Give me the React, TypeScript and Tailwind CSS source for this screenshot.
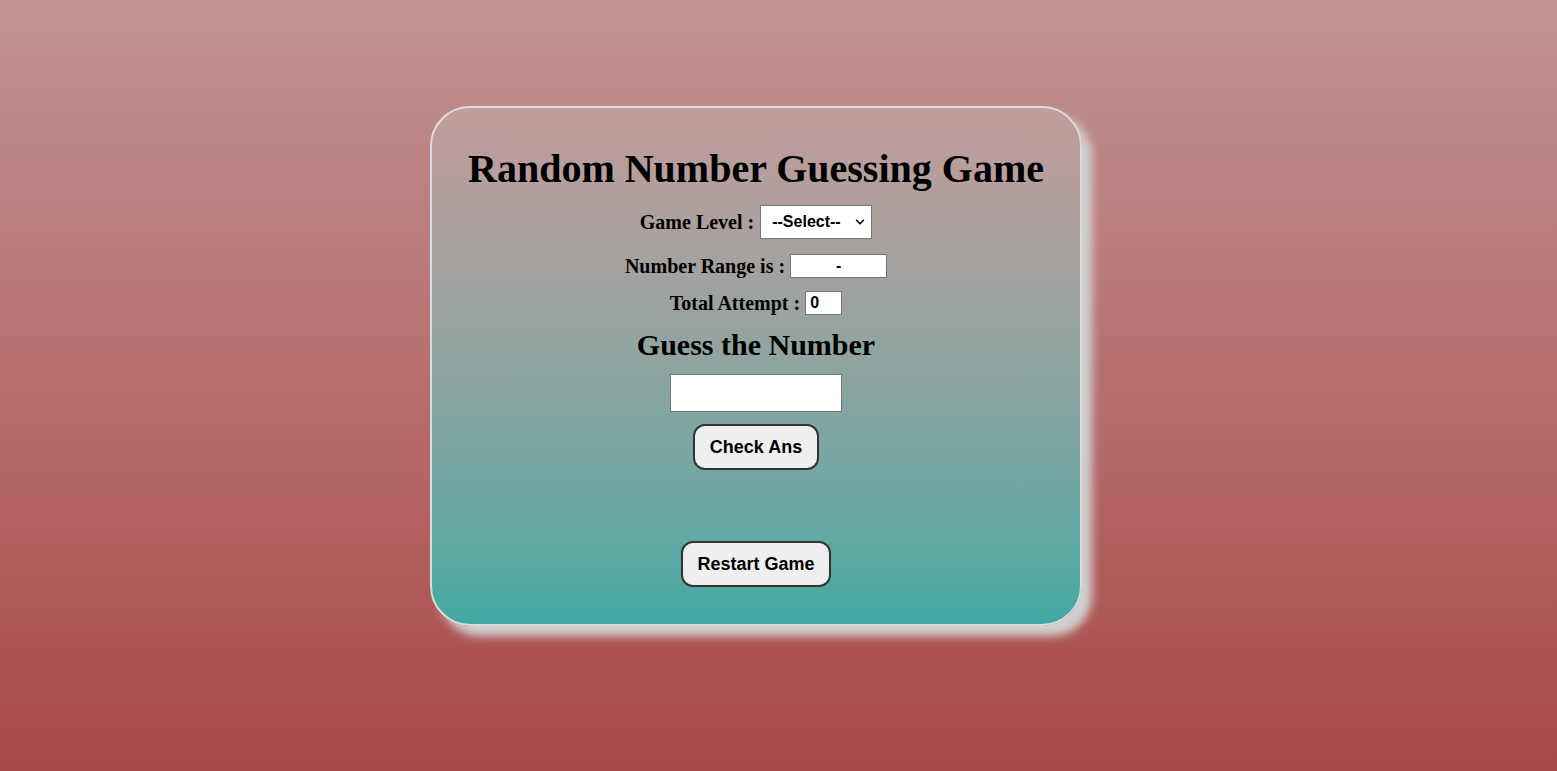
import React, { useState } from "react";
import { ChevronDown } from "lucide-react";

const serif = "font-['Liberation_Serif','Times_New_Roman',serif]";
const sans = "font-['Liberation_Sans',Arial,sans-serif]";

export default function App() {
  const [level, setLevel] = useState("");
  const [guess, setGuess] = useState("");

  return (
    <div className="min-h-[771px] w-full bg-gradient-to-b from-[#c09494] to-[#a84747] flex justify-center pt-[106px] pr-[45px]">
      <div
        className={`w-[652px] h-[520px] rounded-[40px] border-2 border-[#dcdcdc] bg-gradient-to-b from-[#c29c9c] to-[#42a9a4] shadow-[10px_10px_10px_#d2d2d2] flex flex-col items-center text-black ${serif}`}
      >
        <h1 className="mt-[38px] text-[40px] leading-[46px] font-bold">
          Random Number Guessing Game
        </h1>

        <div className="mt-[13px] flex items-center gap-[6px] text-[20px] leading-[23px] font-bold">
          <label>Game Level :</label>
          <div className="relative">
            <select
              value={level}
              onChange={(e) => setLevel(e.target.value)}
              className={`appearance-none h-[34px] w-[112px] border border-[#767676] bg-white pl-[11px] pr-[24px] text-[16px] leading-[20px] font-bold ${sans}`}
            >
              <option value="">--Select--</option>
              <option value="easy">Easy</option>
              <option value="medium">Medium</option>
              <option value="hard">Hard</option>
            </select>
            <ChevronDown
              size={14}
              strokeWidth={2.5}
              className="pointer-events-none absolute right-[5px] top-[10px]"
            />
          </div>
        </div>

        <div className="mt-[15px] flex items-center gap-[5px] text-[20px] leading-[23px] font-bold">
          <label>Number Range is :</label>
          <input
            readOnly
            value="-"
            className={`h-[24px] w-[97px] border border-[#767676] bg-white text-center text-[16px] leading-[20px] font-bold ${sans}`}
          />
        </div>

        <div className="mt-[13px] flex items-center gap-[5px] text-[20px] leading-[23px] font-bold">
          <label>Total Attempt :</label>
          <input
            readOnly
            value="0"
            className={`h-[24px] w-[37px] border border-[#767676] bg-white pl-[4px] text-[16px] leading-[20px] font-bold ${sans}`}
          />
        </div>

        <h2 className="mt-[13px] text-[30px] leading-[34px] font-bold">
          Guess the Number
        </h2>

        <input
          value={guess}
          onChange={(e) => setGuess(e.target.value)}
          className={`mt-[12px] h-[38px] w-[172px] border border-[#767676] bg-white px-2 text-[18px] ${sans}`}
        />

        <button
          className={`mt-[12px] h-[46px] w-[126px] rounded-[12px] border-2 border-[#333] bg-[#efefef] text-[18px] leading-[22px] font-bold ${sans}`}
        >
          Check Ans
        </button>

        <button
          className={`mt-[71px] h-[46px] w-[150px] rounded-[12px] border-2 border-[#333] bg-[#efefef] text-[18px] leading-[22px] font-bold ${sans}`}
        >
          Restart Game
        </button>
      </div>
    </div>
  );
}
